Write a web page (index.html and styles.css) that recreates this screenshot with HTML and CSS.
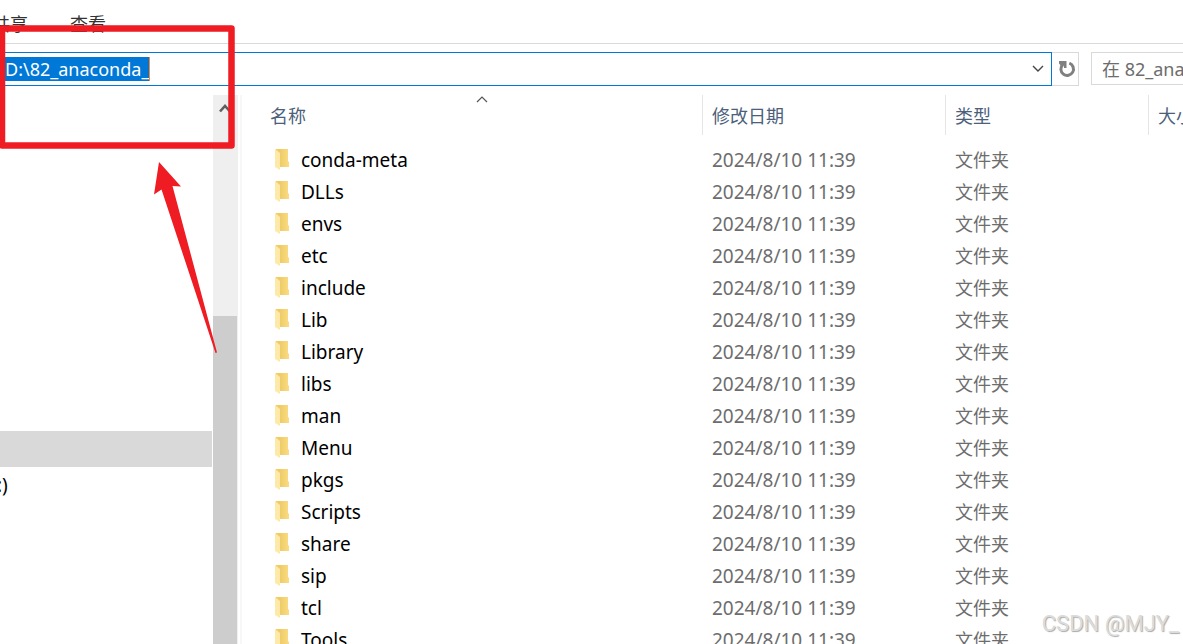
FILE: index.html
```
<!DOCTYPE html>
<html lang="zh-CN">
<head>
  <meta charset="UTF-8">
  <meta name="viewport" content="width=device-width, initial-scale=1.0">
  <title>82_anaconda</title>
  <link rel="stylesheet" href="styles.css">
</head>
<body>
  <nav class="tabs">
    <a href="#">共享</a>
    <a href="#">查看</a>
  </nav>

  <div class="toolbar">
    <div class="address">
      <input type="text" class="path" aria-label="地址" value="D:\82_anaconda_">
      <button class="drop" aria-label="以前的位置">
        <svg width="12" height="8" viewBox="0 0 12 8"><path d="M1 1l5 5 5-5" fill="none" stroke="#444" stroke-width="1.4"/></svg>
      </button>
    </div>
    <button class="refresh" aria-label="刷新">
      <svg width="18" height="18" viewBox="0 0 18 18"><path d="M11.300 3.200A6.300 6.300 0 1 1 4.800 4.600" fill="none" stroke="#808080" stroke-width="3"/><path d="M1 1h7.500v7H6V5.500L3.500 6.500 1 3.500z" fill="#808080"/></svg>
    </button>
    <input type="text" class="search" aria-label="搜索" placeholder="在 82_anaconda 中搜索">
  </div>

  <div class="content">
    <aside class="tree">
      <div class="node selected"></div>
      <div class="node">:)</div>
    </aside>
    <div class="scrollbar">
      <svg class="up" width="12" height="10" viewBox="0 0 12 10"><path d="M1 8.500l5-5.500 5 5.500" fill="none" stroke="#606060" stroke-width="2.600"/></svg>
      <div class="thumb"></div>
    </div>

    <main class="files">
      <svg class="sort" width="12" height="7" viewBox="0 0 12 7"><path d="M1 6l5-5 5 5" fill="none" stroke="#555" stroke-width="1.200"/></svg>
      <table>
        <colgroup>
          <col class="col-name">
          <col class="col-date">
          <col class="col-type">
          <col>
        </colgroup>
        <thead>
          <tr><th>名称</th><th>修改日期</th><th>类型</th><th>大小</th></tr>
        </thead>
        <tbody id="rows"></tbody>
      </table>
    </main>
  </div>

  <svg class="marks" width="240" height="360" viewBox="0 0 240 360">
    <rect x="2" y="28.500" width="229.500" height="117" fill="none" stroke="#ef1c24" stroke-width="6.500" stroke-linejoin="round"/>
    <path d="M159 162L181 186.500 172.500 186 217 352.500 215.500 353 161.500 189.500 154 194.500z" fill="#ef1c24"/>
  </svg>
  <div class="watermark">CSDN @MJY_</div>

  <script>
    const folders = ['conda-meta', 'DLLs', 'envs', 'etc', 'include', 'Lib', 'Library', 'libs',
      'man', 'Menu', 'pkgs', 'Scripts', 'share', 'sip', 'tcl', 'Tools'];
    const icon = `<svg class="folder" width="15" height="22" viewBox="0 0 15 22">
      <defs><linearGradient id="back"><stop offset="0.300" stop-color="#efcb68"/><stop offset="1" stop-color="#fadc82"/></linearGradient></defs>
      <path d="M1 0h12v12l1 1v5H1z" fill="url(#back)"/>
      <path d="M0 0l5 4v17l-5-3z" fill="#ffe9a6"/></svg>`;

    document.getElementById('rows').innerHTML = folders.map(name => `
      <tr>
        <td><span class="name">${icon}${name}</span></td>
        <td>2024/8/10 11:39</td>
        <td class="type">文件夹</td>
        <td></td>
      </tr>`).join('');
  </script>
</body>
</html>
```
FILE: styles.css
```
* {
  box-sizing: border-box;
}
body {
  margin: 0;
  height: 100vh;
  overflow: hidden;
  display: flex;
  flex-direction: column;
  position: relative;
  background: white;
  color: #000;
  font-family: "Noto Sans", "Noto Sans CJK SC", sans-serif;
  font-size: 19px;
}
button, input {
  font: inherit;
  border: 0;
  padding: 0;
  margin: 0;
  background: none;
}
svg {
  display: block;
  flex-shrink: 0;
}
.tabs {
  display: flex;
  gap: 42px;
  height: 44px;
  margin-bottom: 8px;
  border-bottom: 1px solid #dadada;
  font-size: 18px;
  line-height: 48px;
}
.tabs a {
  color: #333;
  text-decoration: none;
}
.tabs a:first-child {
  margin-left: -8px;
}
.toolbar {
  display: flex;
  height: 34px;
  margin-bottom: 9px;
}
.address {
  flex: 1;
  display: flex;
  align-items: center;
  justify-content: space-between;
  padding: 0 7px 0 5px;
  border: 1px solid #0078d7;
  border-left: 0;
}
.path {
  field-sizing: content;
  height: 24px;
  line-height: 24px;
  background: #0078d7;
  color: white;
  border-right: 1px solid #ff8728;
  font-size: 18px;
}
.refresh {
  display: flex;
  align-items: center;
  justify-content: flex-end;
  width: 27px;
  margin-right: 12px;
  padding-right: 2px;
  border: 1px solid #d9d9d9;
  border-left: 0;
}
.search {
  width: 92px;
  height: 33px;
  padding-left: 10px;
  border: 1px solid #d9d9d9;
  border-right: 0;
  font-size: 18px;
}
.search::placeholder {
  color: #6d6d6d;
}
.content {
  flex: 1;
  min-height: 0;
  display: flex;
}
.tree {
  width: 213px;
  padding: 336px 1px 0 0;
  overflow: hidden;
}
.node {
  height: 36px;
  line-height: 36px;
  text-indent: -3px;
}
.node.selected {
  background: #d9d9d9;
}
.scrollbar {
  display: flex;
  flex-direction: column;
  width: 25px;
  padding-right: 1px;
  background: #efefef;
}
.up {
  margin: 8px 6px 0;
}
.thumb {
  flex: 1;
  margin-top: 203px;
  background: #cdcdcd;
}
.files {
  flex: 1;
  min-width: 0;
  margin-left: 2px;
  border-left: 2px solid #f7f7f7;
  overflow: hidden;
  position: relative;
}
.sort {
  position: absolute;
  left: 234px;
  top: 1px;
}
table {
  width: 100%;
  table-layout: fixed;
  border-collapse: separate;
  border-spacing: 0;
}
.col-name {
  width: 461px;
}
.col-date {
  width: 243px;
}
.col-type {
  width: 203px;
}
th, td {
  padding: 0 0 0 9px;
  text-align: left;
  white-space: nowrap;
}
th {
  height: 40px;
  border-right: 1px solid #e5e5e5;
  color: #4c607a;
  font-size: 18px;
  font-weight: normal;
}
th:first-child {
  padding-left: 28px;
}
th:last-child {
  border-right: 0;
}
tbody::before {
  content: "";
  display: block;
  height: 9px;
}
td {
  height: 32px;
  color: #6d6d6d;
  line-height: 32px;
}
td:first-child {
  padding-left: 33px;
  color: #000;
}
.type {
  font-size: 18px;
}
.name {
  display: flex;
  align-items: center;
  gap: 11px;
}
.marks {
  position: absolute;
  left: 0;
  top: 0;
  pointer-events: none;
}
.watermark {
  position: absolute;
  right: 4px;
  bottom: 4px;
  color: #dcdcdc;
  font-family: Roboto, sans-serif;
  font-size: 22px;
  line-height: 32px;
  text-shadow: 1px 1px 1px #aaa;
}
```
